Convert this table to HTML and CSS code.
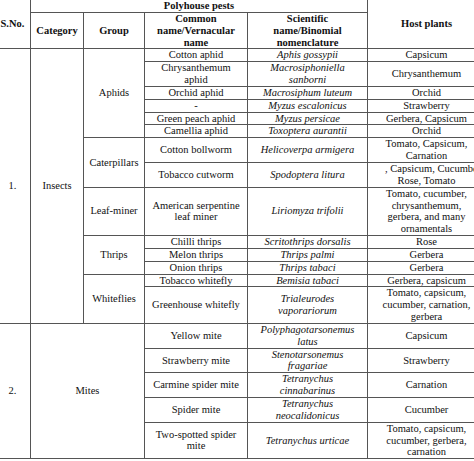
FILE: index.html
```html
<!DOCTYPE html>
<html lang="en">
<head>
<meta charset="utf-8">
<title>Polyhouse pests</title>
<link rel="stylesheet" href="styles.css">
</head>
<body>
<table class="pests">
  <colgroup>
    <col class="c-sno">
    <col class="c-cat">
    <col class="c-grp">
    <col class="c-common">
    <col class="c-sci">
    <col class="c-host">
  </colgroup>
  <thead>
    <tr>
      <th rowspan="2" class="sno-head">S.No.</th>
      <th colspan="4">Polyhouse pests</th>
      <th rowspan="2">Host plants</th>
    </tr>
    <tr>
      <th>Category</th>
      <th>Group</th>
      <th>Common<br>name/Vernacular<br>name</th>
      <th>Scientific<br>name/Binomial<br>nomenclature</th>
    </tr>
  </thead>
  <tbody>
    <tr>
      <td rowspan="14">1.</td>
      <td rowspan="14">Insects</td>
      <td rowspan="6">Aphids</td>
      <td>Cotton aphid</td>
      <td class="sci">Aphis gossypii</td>
      <td>Capsicum</td>
    </tr>
    <tr>
      <td>Chrysanthemum<br>aphid</td>
      <td class="sci">Macrosiphoniella<br>sanborni</td>
      <td>Chrysanthemum</td>
    </tr>
    <tr>
      <td>Orchid aphid</td>
      <td class="sci">Macrosiphum luteum</td>
      <td>Orchid</td>
    </tr>
    <tr>
      <td>-</td>
      <td class="sci">Myzus escalonicus</td>
      <td>Strawberry</td>
    </tr>
    <tr>
      <td>Green peach aphid</td>
      <td class="sci">Myzus persicae</td>
      <td>Gerbera, Capsicum</td>
    </tr>
    <tr>
      <td>Camellia aphid</td>
      <td class="sci">Toxoptera aurantii</td>
      <td>Orchid</td>
    </tr>
    <tr>
      <td rowspan="2">Caterpillars</td>
      <td>Cotton bollworm</td>
      <td class="sci">Helicoverpa armigera</td>
      <td>Tomato, Capsicum,<br>Carnation</td>
    </tr>
    <tr>
      <td>Tobacco cutworm</td>
      <td class="sci">Spodoptera litura</td>
      <td><span class="overflow-line">, Capsicum, Cucumber</span>Rose, Tomato</td>
    </tr>
    <tr>
      <td>Leaf-miner</td>
      <td>American serpentine<br>leaf miner</td>
      <td class="sci">Liriomyza trifolii</td>
      <td>Tomato, cucumber,<br>chrysanthemum,<br>gerbera, and many<br>ornamentals</td>
    </tr>
    <tr>
      <td rowspan="3">Thrips</td>
      <td>Chilli thrips</td>
      <td class="sci">Scritothrips dorsalis</td>
      <td>Rose</td>
    </tr>
    <tr>
      <td>Melon thrips</td>
      <td class="sci">Thrips palmi</td>
      <td>Gerbera</td>
    </tr>
    <tr>
      <td>Onion thrips</td>
      <td class="sci">Thrips tabaci</td>
      <td>Gerbera</td>
    </tr>
    <tr>
      <td rowspan="2">Whiteflies</td>
      <td>Tobacco whitefly</td>
      <td class="sci">Bemisia tabaci</td>
      <td>Gerbera, capsicum</td>
    </tr>
    <tr>
      <td>Greenhouse whitefly</td>
      <td class="sci">Trialeurodes<br>vaporariorum</td>
      <td>Tomato, capsicum,<br>cucumber, carnation,<br>gerbera</td>
    </tr>
    <tr>
      <td rowspan="5">2.</td>
      <td rowspan="5" colspan="2">Mites</td>
      <td>Yellow mite</td>
      <td class="sci">Polyphagotarsonemus<br>latus</td>
      <td>Capsicum</td>
    </tr>
    <tr>
      <td>Strawberry mite</td>
      <td class="sci">Stenotarsonemus<br>fragariae</td>
      <td>Strawberry</td>
    </tr>
    <tr>
      <td>Carmine spider mite</td>
      <td class="sci">Tetranychus<br>cinnabarinus</td>
      <td>Carnation</td>
    </tr>
    <tr>
      <td>Spider mite</td>
      <td class="sci">Tetranychus<br>neocalidonicus</td>
      <td>Cucumber</td>
    </tr>
    <tr>
      <td>Two-spotted spider<br>mite</td>
      <td class="sci">Tetranychus urticae</td>
      <td>Tomato, capsicum,<br>cucumber, gerbera,<br>carnation</td>
    </tr>
  </tbody>
</table>
</body>
</html>
```

FILE: styles.css
```css
html, body {
  margin: 0;
  padding: 0;
  background: #ffffff;
}

body {
  width: 474px;
  height: 461px;
  overflow: hidden;
}

.pests {
  border-collapse: collapse;
  table-layout: fixed;
  width: 491px;
  margin: -1px 0 0 -6px;
  font-family: "Liberation Serif", "Times New Roman", serif;
  font-size: 10.5px;
  line-height: 11.85px;
  color: #111111;
}

.c-sno { width: 36px; }
.c-cat { width: 53px; }
.c-grp { width: 61px; }
.c-common { width: 103px; }
.c-sci { width: 120px; }
.c-host { width: 118px; }

.pests th,
.pests td {
  border: 1px solid #555555;
  padding: 0;
  text-align: center;
  vertical-align: middle;
  white-space: nowrap;
  overflow: hidden;
}

.pests th {
  font-weight: bold;
}

.pests td {
  font-weight: normal;
}

.sno-head {
  padding-bottom: 12px;
}

.sci {
  font-style: italic;
}

.overflow-line {
  display: block;
  text-align: left;
  padding-left: 17px;
}
```
